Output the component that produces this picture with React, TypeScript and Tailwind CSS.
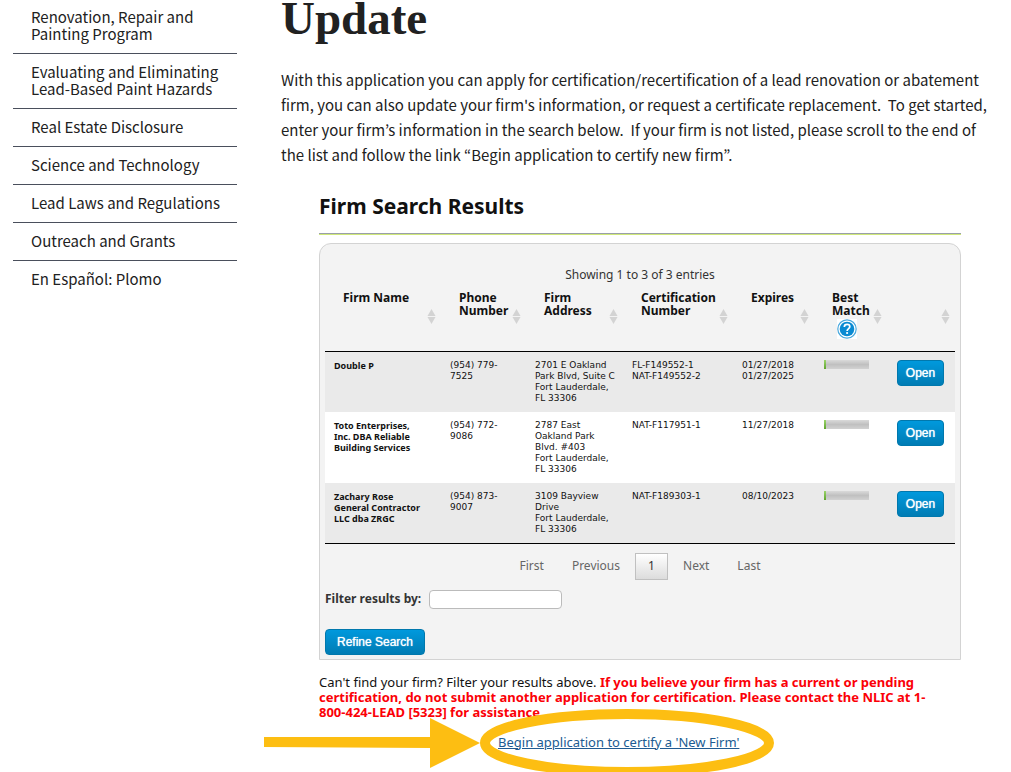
import { useState } from "react";

const navLinks = [
  "Renovation, Repair and Painting Program",
  "Evaluating and Eliminating Lead-Based Paint Hazards",
  "Real Estate Disclosure",
  "Science and Technology",
  "Lead Laws and Regulations",
  "Outreach and Grants",
  "En Español: Plomo",
];

const columns = [
  { label: "Firm Name", width: "w-[116px]" },
  { label: "Phone Number", width: "w-[85px]" },
  { label: "Firm Address", width: "w-[97px]" },
  { label: "Certification Number", width: "w-[110px]" },
  { label: "Expires", width: "w-[81px]" },
  { label: "Best Match", width: "w-[73px]", help: true },
  { label: "", width: "w-[68px]" },
];

const firms = [
  {
    name: "Double P",
    phone: "(954) 779-7525",
    address: ["2701 E Oakland", "Park Blvd, Suite C", "Fort Lauderdale,", "FL 33306"],
    certs: ["FL-F149552-1", "NAT-F149552-2"],
    expires: ["01/27/2018", "01/27/2025"],
    match: 4,
  },
  {
    name: "Toto Enterprises, Inc. DBA Reliable Building Services",
    phone: "(954) 772-9086",
    address: ["2787 East", "Oakland Park", "Blvd. #403", "Fort Lauderdale,", "FL 33306"],
    certs: ["NAT-F117951-1"],
    expires: ["11/27/2018"],
    match: 4,
  },
  {
    name: "Zachary Rose General Contractor LLC dba ZRGC",
    phone: "(954) 873-9007",
    address: ["3109 Bayview", "Drive", "Fort Lauderdale,", "FL 33306"],
    certs: ["NAT-F189303-1"],
    expires: ["08/10/2023"],
    match: 4,
  },
];

const buttonClass =
  "h-[26px] rounded border border-[#0078ad] bg-linear-to-b from-[#0099dd] to-[#007cb4] font-['Liberation_Sans',sans-serif] text-[12px] leading-none text-white [text-shadow:0_0_1px_white]";

function Lines({ items }: { items: string[] }) {
  return (
    <>
      {items.map((line) => (
        <span key={line} className="block whitespace-nowrap">
          {line}
        </span>
      ))}
    </>
  );
}

function SortIcon() {
  return (
    <svg className="absolute top-1/2 right-[5px] -mt-[7px] h-[15px] w-[9px]" viewBox="0 0 9 15" fill="#d3d3d3" aria-hidden="true">
      <path d="M4.5 0 L8.5 7 H0.5 Z" />
      <path d="M4.5 15 L8.5 8 H0.5 Z" />
    </svg>
  );
}

function HelpIcon() {
  return (
    <svg className="mt-[2px] ml-[5px] block size-5 bg-white" viewBox="0 0 20 20" role="img" aria-label="Help">
      <circle cx="10" cy="10" r="9.2" fill="#fff" stroke="#4aa9de" strokeWidth="1.2" />
      <circle cx="10" cy="10" r="7.3" fill="#0a8ad2" />
      <path d="M7.3 8 C7.3 6.2 8.5 5.4 10.1 5.4 C11.8 5.4 12.8 6.4 12.8 7.7 C12.8 9.5 10.1 9.7 10.1 11.9" fill="none" stroke="#fff" strokeWidth="1.7" />
      <circle cx="10.1" cy="14" r="1.1" fill="#fff" />
    </svg>
  );
}

function ResultsTable() {
  return (
    <table className="w-full table-fixed border-collapse text-left">
      <thead>
        <tr className="h-[69px] border-b border-black align-top">
          {columns.map((col) => (
            <th key={col.label} scope="col" className={`relative pt-[9px] pr-4 pl-[18px] text-[12px] leading-[13px] font-bold text-[#111] ${col.width}`}>
              {col.label}
              {col.help && <HelpIcon />}
              <SortIcon />
            </th>
          ))}
        </tr>
      </thead>
      <tbody className="border-b border-black font-['DejaVu_Sans',sans-serif]">
        {firms.map((firm) => (
          <tr key={firm.name} className="align-top text-[9px] leading-[11px] text-[#111] odd:bg-[#eaeaea] even:bg-white">
            <td className="py-2 pr-4 pl-[9px] font-['Noto_Sans',sans-serif] font-bold">{firm.name}</td>
            <td className="py-2 pr-5 pl-[9px]">{firm.phone}</td>
            <td className="py-2 pl-[9px]">
              <Lines items={firm.address} />
            </td>
            <td className="py-2 pl-[9px]">
              <Lines items={firm.certs} />
            </td>
            <td className="py-2 pl-[9px]">
              <Lines items={firm.expires} />
            </td>
            <td className="py-2 pl-[10px]">
              <div className="h-[9px] w-[45px] bg-linear-to-b from-[#dadada] via-[#c0c0c0] to-[#d2d2d2]">
                <div className="h-full bg-linear-to-b from-[#9bd36a] to-[#5fa52c]" style={{ width: `${firm.match}%` }} />
              </div>
            </td>
            <td className="py-2 pl-[10px]">
              <button type="button" className={`block w-[47px] ${buttonClass}`}>
                Open
              </button>
            </td>
          </tr>
        ))}
      </tbody>
    </table>
  );
}

function Pagination() {
  const item = "h-[27px] px-[13px] text-[#666]";
  return (
    <div className="mt-[9px] flex justify-center gap-[2px] text-[12px]">
      <button type="button" className={item}>First</button>
      <button type="button" className={item}>Previous</button>
      <button type="button" aria-current="page" className="h-[27px] w-[33px] border border-[#c0c0c0] bg-linear-to-b from-white to-[#dcdcdc] text-[#333]">
        1
      </button>
      <button type="button" className={item}>Next</button>
      <button type="button" className={item}>Last</button>
    </div>
  );
}

export default function App() {
  const [filter, setFilter] = useState("");

  return (
    <div className="flex overflow-hidden bg-white pr-3 pl-[13px] text-[#212121]">
      {/* Section navigation */}
      <nav className="-mt-px w-[224px] shrink-0 font-['Noto_Sans_CJK_KR',sans-serif] text-[15px] leading-[17px]">
        <ul>
          {navLinks.map((link) => (
            <li key={link} className="border-b border-[#4a4f5c] last:border-b-0">
              <a href="#" className="block pt-[9px] pr-3 pb-[11px] pl-[18px]">
                {link}
              </a>
            </li>
          ))}
        </ul>
      </nav>

      <main className="ml-11 min-w-0 flex-1">
        <h1 className="font-['Liberation_Serif',serif] text-[47px] leading-9 font-bold">Update</h1>
        <p className="mt-[31px] font-['Noto_Sans_CJK_KR',sans-serif] text-[15px] leading-[25px]">
          With this application you can apply for certification/recertification of a lead renovation or abatement firm, you can
          also update your firm's information, or request a certificate replacement.&nbsp; To get started, enter your firm’s
          information in the search below.&nbsp; If your firm is not listed, please scroll to the end of the list and follow the
          link “Begin application to certify new firm”.
        </p>

        <section className="mx-[38px] mt-[27px] font-['Noto_Sans',sans-serif]">
          <h2 className="border-b border-[#9a9fa8] pb-[14px] text-[21px] leading-[25px] font-bold text-[#111] shadow-[0_1px_0_#cfe87a]">
            Firm Search Results
          </h2>

          {/* Results panel */}
          <div className="mt-[9px] rounded-t-xl border border-[#d3d3d3] bg-[#f3f3f3] px-[5px] pt-6 pb-1">
            <p className="text-center text-[12px] leading-[14px] text-[#333]">Showing 1 to 3 of 3 entries</p>
            <ResultsTable />
            <Pagination />
            <div className="mt-[10px] flex items-center gap-2">
              <label htmlFor="filter" className="text-[12px] leading-[14px] font-bold text-[#333]">
                Filter results by:
              </label>
              <input
                id="filter"
                type="text"
                value={filter}
                onChange={(e) => setFilter(e.target.value)}
                className="h-[19px] w-[133px] rounded border border-[#bbb] bg-white px-1 text-[12px]"
              />
            </div>
            <button type="button" className={`mt-5 block w-[100px] ${buttonClass}`}>
              Refine Search
            </button>
          </div>

          <p className="mt-[15px] text-[13px] leading-[15px] text-[#111]">
            Can't find your firm? Filter your results above.{" "}
            <strong className="text-[#fb0007]">
              If you believe your firm has a current or pending certification, do not submit another application for
              certification. Please contact the NLIC at 1-<span className="whitespace-nowrap">800-424-LEAD</span> [5323] for
              assistance.
            </strong>
          </p>

          {/* Link with its callout arrow and ring */}
          <div className="relative mt-[15px] mb-[22px] pl-[179px] text-[13px] leading-[15px]">
            <a href="#" className="text-[#205b92] underline">
              Begin application to certify a 'New Firm'
            </a>
            <svg className="pointer-events-none absolute -top-[26px] -left-[55px] h-[68px] w-[510px]" viewBox="0 0 510 68" fill="none" aria-hidden="true">
              <path d="M0 28 H166 V9 L216 34 L166 59 V39 L0 38 Z" fill="#fdbe12" />
              <ellipse cx="363" cy="34" rx="142" ry="29" stroke="#fdbe12" strokeWidth="10" />
            </svg>
          </div>
        </section>
      </main>
    </div>
  );
}
